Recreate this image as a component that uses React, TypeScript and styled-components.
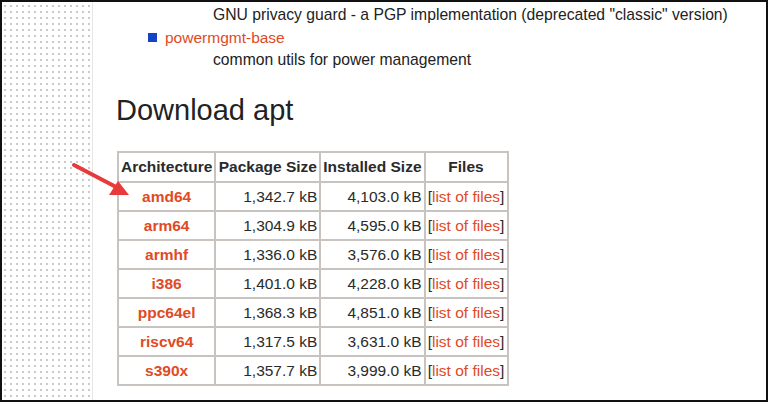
import React from "react";
import styled, { createGlobalStyle } from "styled-components";

const GlobalStyle = createGlobalStyle`
  html, body {
    margin: 0;
    padding: 0;
    background: #fff;
  }
  body {
    font-family: "Liberation Sans", Arial, sans-serif;
    color: #222;
  }
`;

const Frame = styled.div`
  position: relative;
  width: 768px;
  height: 402px;
  box-sizing: border-box;
  border: 2px solid #111;
  display: flex;
  overflow: hidden;
  background: #fff;
`;

const Sidebar = styled.div`
  width: 90px;
  flex-shrink: 0;
  border-right: 1px solid #e6e6e6;
  background-color: #fff;
  background-image: radial-gradient(circle, #cacaca 1px, transparent 1.4px);
  background-size: 6px 6px;
  background-position: 0 1px;
`;

const Main = styled.div`
  flex: 1;
  padding: 2px 0 0 23px;
  display: flex;
  flex-direction: column;
  align-items: flex-start;
`;

const Desc = styled.div`
  padding-left: 97px;
  font-size: 15.7px;
  line-height: 22px;
  color: #222;
`;

const PackageRow = styled.div`
  display: flex;
  align-items: center;
  padding-left: 32px;
  height: 23px;
`;

const Bullet = styled.span`
  width: 9px;
  height: 9px;
  background: #1443c4;
  margin-right: 8px;
`;

const Link = styled.a<{ $bold?: boolean }>`
  color: #e04a24;
  text-decoration: none;
  font-weight: ${(p) => (p.$bold ? "bold" : "normal")};
  font-size: 15.5px;
`;

const Heading = styled.h2`
  margin: 21px 0 0;
  font-size: 29px;
  font-weight: normal;
  line-height: 36px;
  color: #222;
`;

const Table = styled.table`
  margin-top: 23px;
  margin-left: 1px;
  border-collapse: collapse;
  font-size: 15.5px;
  color: #2a2a2a;
`;

const Th = styled.th<{ $w: number }>`
  width: ${(p) => p.$w}px;
  box-sizing: border-box;
  border: 2px solid #c8c3be;
  padding: 4px 2px;
  line-height: 20px;
  font-weight: bold;
  text-align: center;
  white-space: nowrap;
`;

const Td = styled.td<{ $align: "left" | "right" | "center" }>`
  border: 2px solid #c8c3be;
  padding: 4px 2px;
  line-height: 19px;
  text-align: ${(p) => p.$align};
  white-space: nowrap;
`;

const Bracket = styled.span`
  color: #2a2a2a;
`;

const Arrow = styled.svg`
  position: absolute;
  left: 64px;
  top: 157px;
`;

const rows = [
  ["amd64", "1,342.7 kB", "4,103.0 kB"],
  ["arm64", "1,304.9 kB", "4,595.0 kB"],
  ["armhf", "1,336.0 kB", "3,576.0 kB"],
  ["i386", "1,401.0 kB", "4,228.0 kB"],
  ["ppc64el", "1,368.3 kB", "4,851.0 kB"],
  ["riscv64", "1,317.5 kB", "3,631.0 kB"],
  ["s390x", "1,357.7 kB", "3,999.0 kB"],
];

export default function App() {
  return (
    <>
      <GlobalStyle />
      <Frame>
        <Sidebar />
        <Main>
          <Desc>GNU privacy guard - a PGP implementation (deprecated "classic" version)</Desc>
          <PackageRow>
            <Bullet />
            <Link href="#">powermgmt-base</Link>
          </PackageRow>
          <Desc>common utils for power management</Desc>
          <Heading>Download apt</Heading>
          <Table>
            <thead>
              <tr>
                <Th $w={97}>Architecture</Th>
                <Th $w={105}>Package Size</Th>
                <Th $w={104}>Installed Size</Th>
                <Th $w={83}>Files</Th>
              </tr>
            </thead>
            <tbody>
              {rows.map(([arch, pkg, inst]) => (
                <tr key={arch}>
                  <Td $align="center">
                    <Link href="#" $bold>
                      {arch}
                    </Link>
                  </Td>
                  <Td $align="right">{pkg}</Td>
                  <Td $align="right">{inst}</Td>
                  <Td $align="center">
                    <Bracket>[</Bracket>
                    <Link href="#">list of files</Link>
                    <Bracket>]</Bracket>
                  </Td>
                </tr>
              ))}
            </tbody>
          </Table>
        </Main>
        <Arrow width="72" height="44" viewBox="0 0 72 44">
          <line x1="8" y1="6" x2="52" y2="29" stroke="#e83a3a" strokeWidth="4" strokeLinecap="round" />
          <polygon points="63,36 43,36 52,22" fill="#e83a3a" />
        </Arrow>
      </Frame>
    </>
  );
}
